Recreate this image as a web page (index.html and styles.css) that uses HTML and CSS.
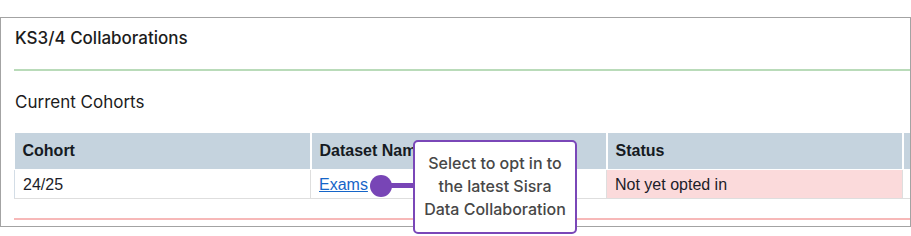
FILE: index.html
```html
<!DOCTYPE html>
<html lang="en">
<head>
	<meta charset="UTF-8">
	<title>KS3/4 Collaborations</title>
	<link rel="stylesheet" href="styles.css">
</head>
<body>
<div class="panel">
	<div class="panel-head">
		<h2 class="panel-title">KS3/4 Collaborations</h2>
	</div>
	<h3 class="section-title">Current Cohorts</h3>
	<div class="table-wrap">
		<table class="cohorts">
			<thead>
				<tr>
					<th>Cohort</th>
					<th>Dataset Name</th>
					<th>Status</th>
					<th></th>
				</tr>
			</thead>
			<tbody>
				<tr>
					<td>24/25</td>
					<td><a href="#">Exams</a></td>
					<td class="status-no">Not yet opted in</td>
					<td></td>
				</tr>
			</tbody>
		</table>
	</div>
	<div class="panel-foot"></div>

	<!-- guide tip pointing at the dataset link -->
	<span class="tip-dot"></span>
	<span class="tip-line"></span>
	<div class="tip">Select to opt in to<br>the latest Sisra<br>Data Collaboration</div>
</div>
</body>
</html>
```

FILE: styles.css
```css
*{margin: 0; padding: 0; box-sizing: border-box}
html,body{ height: 100% }
body{
	min-height: 236px;
	padding-top: 17px;
	font-family: Inter, "Noto Sans", sans-serif;
	color: #1c1c1c;
	background: #fff;
}
.panel{
	position: relative;
	width: 911px;
	border: 1px solid #a3a3a3;
	padding-left: 13px;
}
.panel-head{
	height: 53px;
	padding-top: 8px;
	border-bottom: 2px solid #b9dbb9;
}
.panel-title{
	font-size: 17px;
	font-weight: 500;
	line-height: 24px;
	padding-left: 1px;
}
.section-title{
	margin-top: 19px;
	font-size: 17px;
	font-weight: 400;
	line-height: 24px;
	padding-left: 1px;
}
.table-wrap{
	margin-top: 19px;
	overflow: hidden;
}
.cohorts{
	border-collapse: collapse;
	table-layout: fixed;
	width: 1000px;
	font-family: "Liberation Sans", Arial, sans-serif;
	font-size: 16px;
}
.cohorts th{
	height: 36px;
	background: #c5d3de;
	text-align: left;
	font-weight: bold;
	color: #151a22;
	padding: 0 8px;
	border-right: 2px solid #fff;
	border-bottom: 1px solid #fff;
	width: 296px;
}
.cohorts th:last-child{ width: 112px }
.cohorts td{
	height: 29px;
	padding: 2px 8px 0;
	border: 1px solid #dedede;
	border-top: none;
	color: #1c1c28;
}
.cohorts td:first-child{ border-left-color: #d3dde6 }
.cohorts a{ color: #1565c8 }
.status-no{ background: #fbdadb }
.panel-foot{
	margin-top: 19px;
	height: 8px;
	border-top: 2px solid #f7b8b8;
}
.tip{
	position: absolute;
	z-index: 2;
	left: 412px;
	top: 122px;
	width: 164px;
	height: 94px;
	padding-top: 10px;
	border: 2px solid #7a47b8;
	border-radius: 5px;
	background: #fff;
	color: #474747;
	font-size: 16px;
	font-weight: 500;
	line-height: 23px;
	text-align: center;
}
.tip-dot{
	position: absolute;
	left: 369px;
	top: 157px;
	width: 22px;
	height: 22px;
	border-radius: 50%;
	background: #7845b6;
}
.tip-line{
	position: absolute;
	left: 385px;
	top: 165px;
	width: 30px;
	height: 5px;
	background: #7845b6;
}
```
